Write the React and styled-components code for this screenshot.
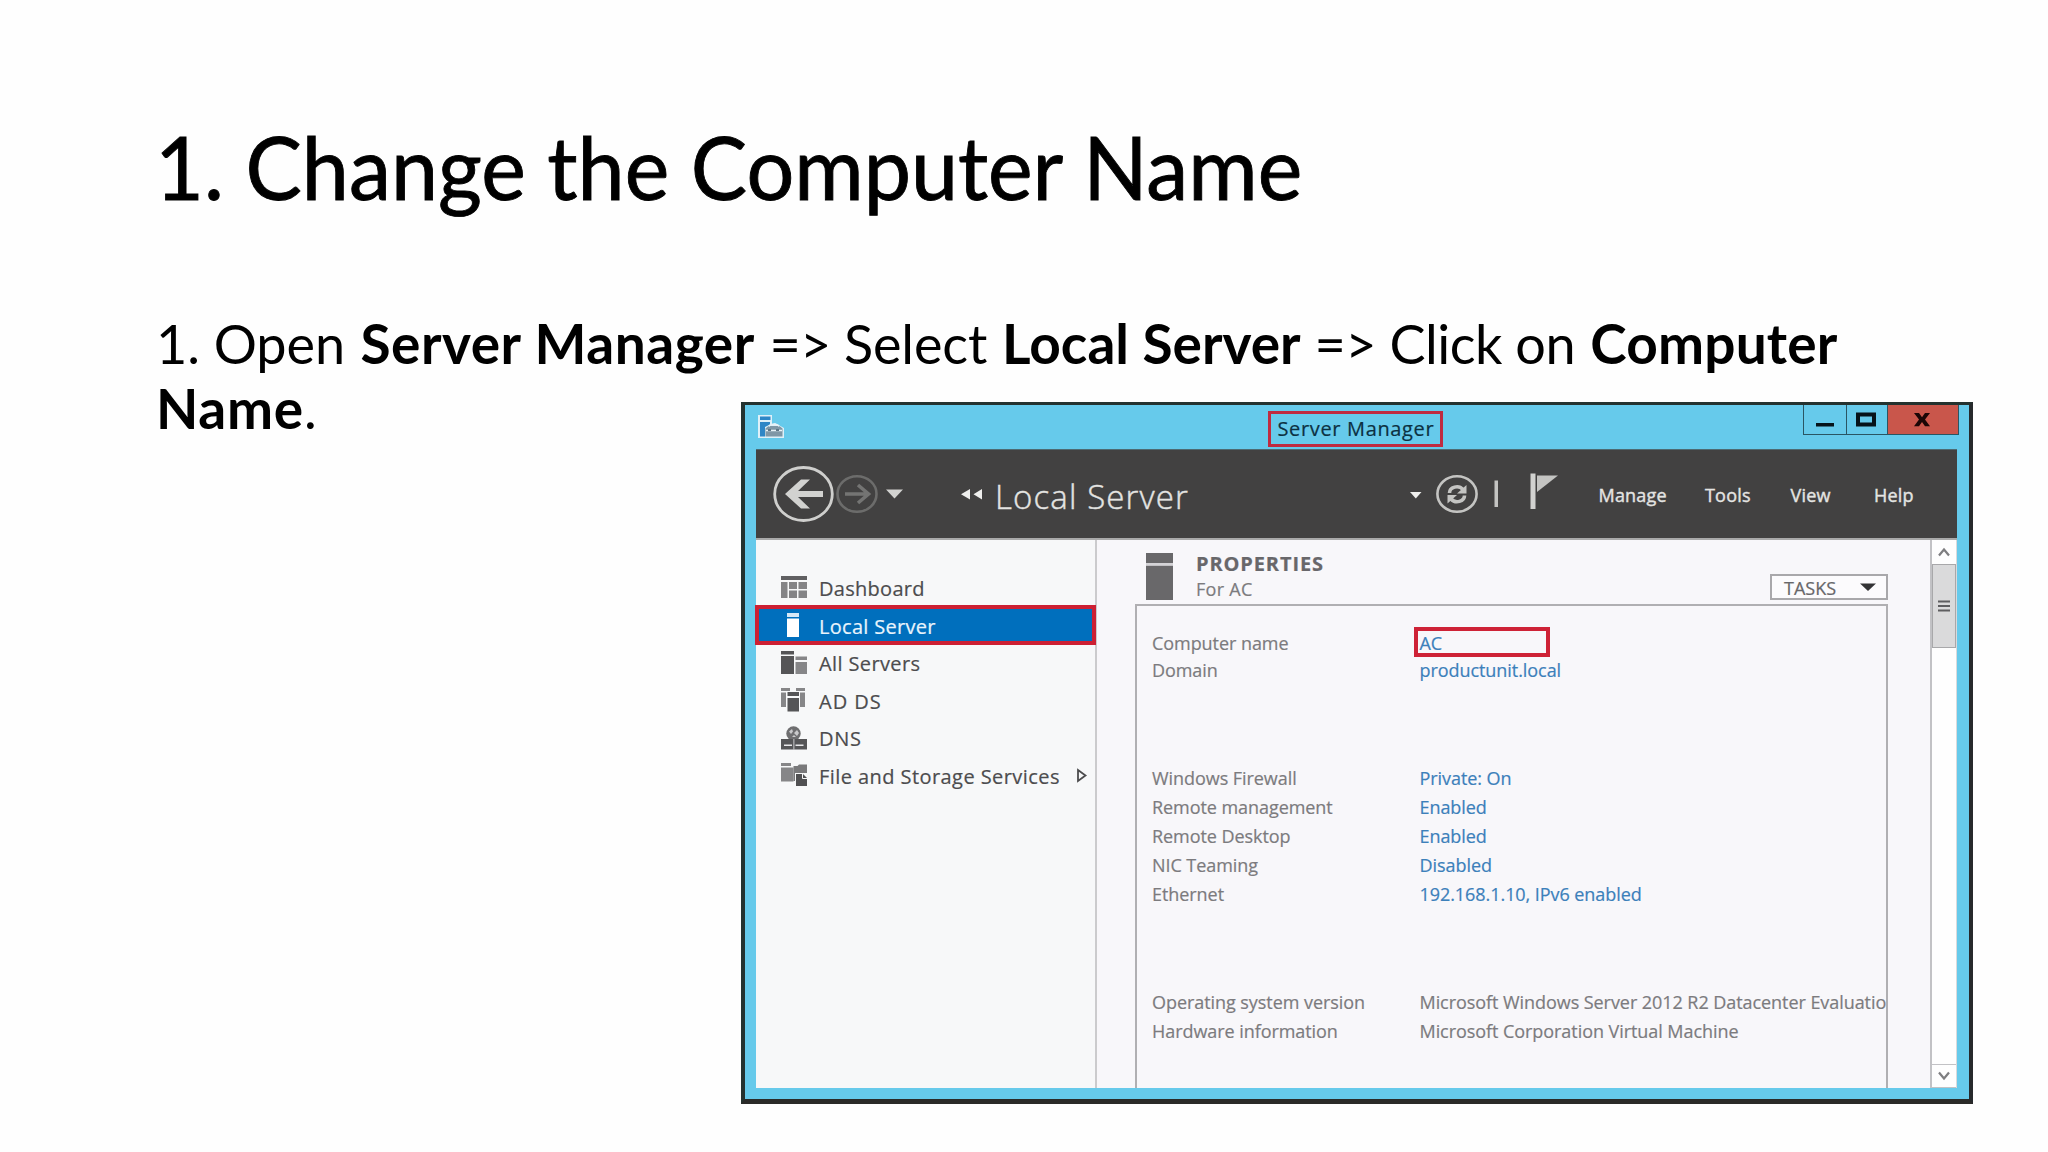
import React from 'react';
import styled, { createGlobalStyle } from 'styled-components';

const GlobalStyle = createGlobalStyle`
    *,
    *::before {
        box-sizing: border-box;
    }

    body {
        margin: 0;
        background: #fefefe;
    }
`

const Slide = styled.main`
    width: 2048px;
    height: 1152px;
    padding-top: 114px;
    overflow: hidden;
    background: #fefefe;
    color: #000;
    font-family: Lato, Carlito, sans-serif;
`

const Heading = styled.h1`
    width: 1300px;
    height: 104px;
    margin: 0 0 93px 155px;
    font-size: 88px;
    font-weight: 400;
    line-height: 104px;
    white-space: nowrap;
    transform: scaleX(0.959);
    transform-origin: left;
    -webkit-text-stroke: 0.9px #000;
`

const Instruction = styled.div`
    height: 91px;
    margin-left: 156px;
    font-size: 54px;
    line-height: 64.5px;
    white-space: nowrap;
`

const InstructionLine = styled.div`
    display: flex;
    align-items: baseline;
    height: 64.5px;
`

const Phrase = styled.span`
    flex: none;
    width: ${props => props.$width}px;
    font-size: ${props => props.$bold ? 55 : 54}px;
    font-weight: ${props => props.$bold ? 700 : 400};
    letter-spacing: ${props => props.$spacing || 0}px;
`

const Window = styled.section`
    display: flex;
    flex-direction: column;
    width: 1232px;
    height: 701.5px;
    margin-left: 741px;
    padding: 0 12px 11px 11px;
    border: solid #24322f;
    border-width: 3px 4px 5px;
    border-right-color: #26292c;
    border-bottom-color: #2a2a28;
    background: #66caeb;
    font-family: "Open Sans", "Noto Sans", sans-serif;
    -webkit-text-stroke: 0.2px;
`

const TitleBar = styled.header`
    display: flex;
    align-items: flex-start;
    flex: none;
    height: 44px;
    margin-right: -2px;
`

const AppIcon = styled.svg`
    width: 27px;
    height: 25px;
    margin: 9px 0 0 2px;
`

const WindowTitle = styled.div`
    width: 175px;
    height: 36px;
    margin: 6px 0 0 483px;
    padding-left: 6.5px;
    border: 3px solid #bf2b40;
    color: #0c3142;
    font-size: 20px;
    line-height: 29px;
    letter-spacing: 0.65px;
    white-space: nowrap;
`

const CaptionButtons = styled.div`
    display: flex;
    margin-left: auto;
    height: 30px;
    border: solid #2a5563;
    border-width: 0 1px 1px;
`

const CaptionButton = styled.button`
    display: flex;
    align-items: center;
    justify-content: center;
    width: ${props => props.$width}px;
    padding: 0 2px 0 0;
    border: 0;
    border-left: ${props => props.$first ? 0 : '1px solid #2a5563'};
    background: ${props => props.$close ? '#c9564b' : 'transparent'};
`

const Toolbar = styled.nav`
    display: flex;
    align-items: center;
    flex: none;
    height: 91px;
    border-top: 1px solid #4d6a72;
    border-bottom: 2px solid #a9a9a9;
    background: #424141;
    color: #e4e4e2;
`

const NavButtons = styled.svg`
    flex: none;
    width: 236px;
    height: 60px;
`

const ServerTitle = styled.div`
    width: 415px;
    font-size: 33px;
    font-weight: 300;
    line-height: 60px;
    letter-spacing: 1.12px;
    padding-left: 3px;
    padding-top: 5px;
    -webkit-text-stroke: 0.4px #e4e4e2;
`

const ToolbarIcons = styled.svg`
    flex: none;
    width: 191.5px;
    height: 60px;
    padding-right: 1.5px;
`

const MenuItem = styled.a`
    flex: none;
    width: ${props => props.$width}px;
    padding-top: 2px;
    font-size: 18px;
    letter-spacing: 0.2px;
    -webkit-text-stroke: 0.4px #e4e4e2;
`

const Content = styled.div`
    display: flex;
    flex: 1;
    min-height: 0;
    background: #f8f7fa;
`

const Sidebar = styled.aside`
    flex: none;
    width: 341px;
    padding-top: 29px;
    border-right: 2px solid #cbcbcd;
    background: #f7f8f9;
`

const SidebarItem = styled.div`
    display: flex;
    align-items: center;
    position: relative;
    height: 37.5px;
    padding-left: 25px;
    color: #4c4c4e;
    font-size: 20px;
    letter-spacing: ${props => props.$spacing}px;
    white-space: nowrap;

    span {
        padding-top: 2px;
    }

    svg {
        flex: none;
    }

    ${props => props.$selected && `
        height: 40px;
        margin: -1.25px -1px -1.25px -1px;
        padding-left: 22px;
        border: 4px solid #cc2033;
        background: #006fbd;
        color: #e9f4fc;
    `}
`

const SidebarIcon = styled.svg`
    width: 27px;
    height: 24px;
    margin-right: 11px;
`

const Expander = styled.svg`
    width: 12px;
    height: 15px;
    margin-left: 16px;
`

const Properties = styled.section`
    display: flex;
    flex-direction: column;
    flex: 1;
    min-width: 0;
    padding: 0 42px 0 38px;
    color: #7c7b7e;
    font-size: 18px;
`

const PropertiesHeader = styled.div`
    display: flex;
    align-items: flex-start;
    flex: none;
    height: 64px;
`

const ServerGlyph = styled.svg`
    width: 27px;
    height: 47px;
    margin: 13px 0 0 11px;
`

const PropertiesTitle = styled.div`
    margin: 11px 0 0 23px;
    line-height: 25px;

    h2 {
        margin: 0;
        color: #68676a;
        font-size: 20px;
        font-weight: 700;
        line-height: 25px;
        letter-spacing: 0.88px;
    }

    p {
        margin: 0;
        padding-top: 1px;
        letter-spacing: 0.29px;
    }
`

const TasksButton = styled.button`
    display: flex;
    align-items: center;
    justify-content: space-between;
    width: 118px;
    height: 26px;
    margin: 34px 0 0 auto;
    padding: 1px 10px 0 12px;
    border: 2px solid #a9a8ab;
    background: #fcfbfd;
    color: #68676a;
    font-family: inherit;
    font-size: 18px;
    line-height: 22px;
`

const PropertiesCard = styled.div`
    flex: 1;
    min-height: 0;
    padding: 23.5px 0 0 15px;
    overflow: hidden;
    border: 2px solid #b0afb2;
    border-bottom: 0;
`

const PropertyGroup = styled.dl`
    margin: 0 0 79.5px;
`

const PropertyRow = styled.div`
    display: grid;
    grid-template-columns: 267.5px 1fr;
    height: ${props => props.$height}px;
    line-height: ${props => props.$height}px;
    white-space: nowrap;

    dt,
    dd {
        margin: 0;
        letter-spacing: -0.06px;
    }
`

const PropertyValue = styled.dd`
    position: relative;
    color: ${props => props.$link ? '#3c80ba' : 'inherit'};

    /* red marker drawn round the value */
    ${props => props.$marked && `
        &::before {
            content: '';
            position: absolute;
            left: -6px;
            top: -2.500px;
            width: 136px;
            height: 30px;
            border: 4px solid #ce2236;
        }
    `}
`

const ScrollBar = styled.div`
    display: flex;
    flex-direction: column;
    flex: none;
    width: 27px;
    border-left: 2px solid #c2c2c5;
    border-right: 1px solid #dadadc;
    background: #fefefe;
`

const ScrollArrow = styled.div`
    display: flex;
    align-items: center;
    justify-content: center;
    height: 24px;
    border-bottom: ${props => props.$down ? 1 : 0}px solid #c2c2c5;
    border-top: ${props => props.$down ? 1 : 0}px solid #c2c2c5;
`

const ScrollThumb = styled.div`
    display: flex;
    align-items: center;
    justify-content: center;
    height: 84px;
    margin-bottom: auto;
    border: 1.5px solid #a8a8aa;
    background: #dadadb;
`

const icons = {
    dashboard: (
        <>
            <path d="M0 0h26v4H0z" fill="#606062" />
            <path d="M0 6h6.500v16H0zM8 6h8v7H8zM17.500 6H26v7h-8.500zM8 14.500h8V22H8zM17.500 14.500H26V22h-8.500z" fill="#848486" />
        </>
    ),
    local: (
        <>
            <path d="M6 0h12v4H6z" fill="#d6e8f6" />
            <path d="M6 5.500h12V24H6z" fill="#fff" />
        </>
    ),
    all: (
        <>
            <path d="M0 0h13v3.500H0zM0 5h13v18H0z" fill="#555557" />
            <path d="M14.500 5.500H26V9H14.500zM14.500 11H26v12H14.500z" fill="#868688" />
        </>
    ),
    adds: (
        <>
            <path d="M0 0h9v3H0zM15 0h9v3h-9zM0 4.500h5V19H0zM19 4.500h5V19h-5z" fill="#868688" />
            <path d="M6.500 4h11.500v4H6.500zM6.500 10h11.500v13.500H6.500z" fill="#555557" />
        </>
    ),
    dns: (
        <>
            <circle cx="12.500" cy="7.500" r="7.200" fill="#6e6e70" />
            <path d="M8 5.500l3-2.500 1 2.500-2 2.500zM13 7l3-3 2 3-2 3zM11 11l2-2 2 2" fill="#c9c9cb" />
            <path d="M0 13h26v10.500H0z" fill="#555557" />
            <path d="M3 18.500h8V20H3zM14.500 18.500h8V20h-8zM5 14v1.500M12.500 13h.8v10.500h-.8z" fill="#e8e8ea" />
        </>
    ),
    files: (
        <>
            <path d="M0 0h10v3H0zM0 4.500h12.500V18.500H0z" fill="#868688" />
            <path d="M12.500 3h4l1.500-1.500h8V10H14v8h-1.500z" fill="#79797b" />
            <path d="M15 11h7l4 4v8H15z" fill="#505052" />
            <path d="M21.500 11v4.500H26" fill="none" stroke="#f7f8f9" strokeWidth="1" />
        </>
    ),
};

const sidebarItems = [
    { label: 'Dashboard', icon: 'dashboard', spacing: 0.29 },
    { label: 'Local Server', icon: 'local', spacing: 0.3, isSelected: true },
    { label: 'All Servers', icon: 'all', spacing: 0.38 },
    { label: 'AD DS', icon: 'adds', spacing: 1 },
    { label: 'DNS', icon: 'dns', spacing: 0.71 },
    { label: 'File and Storage Services', icon: 'files', spacing: 0.43, hasChildren: true },
];

const propertyGroups = [
    {
        rowHeight: 27.5,
        rows: [
            { name: 'Computer name', value: 'AC', isLink: true, isMarked: true },
            { name: 'Domain', value: 'productunit.local', isLink: true },
        ]
    },
    {
        rowHeight: 28.9,
        rows: [
            { name: 'Windows Firewall', value: 'Private: On', isLink: true },
            { name: 'Remote management', value: 'Enabled', isLink: true },
            { name: 'Remote Desktop', value: 'Enabled', isLink: true },
            { name: 'NIC Teaming', value: 'Disabled', isLink: true },
            { name: 'Ethernet', value: '192.168.1.10, IPv6 enabled', isLink: true },
        ]
    },
    {
        rowHeight: 28.9,
        rows: [
            { name: 'Operating system version', value: 'Microsoft Windows Server 2012 R2 Datacenter Evaluatio' },
            { name: 'Hardware information', value: 'Microsoft Corporation Virtual Machine' },
        ]
    },
];

const WindowTitleBar = () => (
    <TitleBar>
        <AppIcon viewBox="0 0 27 25">
            <path d="M0 1h14v9l3-1 9 5v10H0z" fill="#dff0f8" />
            <path d="M2 2.500h10.500V6H2zM2 8h10v2.500L7 13v9.500H2z" fill="#2e86c6" />
            <path d="M7.500 14.500l3-2.500h11l3 2.500v8h-17z" fill="#7f97a6" />
            <path d="M11 12.500c1-3 9-3 10 0M8 16.500h16" fill="none" stroke="#e8f2f7" strokeWidth="1.500" />
            <path d="M10 15h3v2h-3zM18 15h3v2h-3z" fill="#5e7686" />
        </AppIcon>
        <WindowTitle>Server Manager</WindowTitle>
        <CaptionButtons>
            <CaptionButton $width={42} $first>
                <svg width="20" height="30"><path d="M2 18h19v3.500H2z" fill="#06131a" /></svg>
            </CaptionButton>
            <CaptionButton $width={41}>
                <svg width="22" height="30"><path d="M3 9.500h16v10H3z" fill="none" stroke="#06131a" strokeWidth="4" /></svg>
            </CaptionButton>
            <CaptionButton $width={71} $close>
                <svg width="18" height="30"><path d="M1 8h5l3 4.200L12 8h5l-5 6.500 5 6.700h-5l-3-4.300-3 4.300H1l5-6.700z" fill="#1c0606" /></svg>
            </CaptionButton>
        </CaptionButtons>
    </TitleBar>
);

const ServerToolbar = () => (
    <Toolbar>
        <NavButtons viewBox="0 0 236 60">
            <ellipse cx="47.500" cy="30" rx="28.800" ry="26.500" fill="none" stroke="#cfcfcd" strokeWidth="2.800" />
            <path d="M29 30L45 15.500h9L42 27h25v6H42l12 11.500H45z" fill="#d2d2d0" />
            <ellipse cx="101" cy="30" rx="19.500" ry="17.800" fill="none" stroke="#6c6c6b" strokeWidth="2.600" />
            <path d="M89 30h22M102 21l10.500 9-10.500 9" fill="none" stroke="#747473" strokeWidth="3.600" />
            <path d="M130 25.500h17L138.500 34.500z" fill="#d2d2d0" />
            <path d="M214 25v10.500L205 30.200zM226 25v10.500L217.500 30.200z" fill="#efefed" />
        </NavButtons>
        <ServerTitle>Local Server</ServerTitle>
        <ToolbarIcons viewBox="0 0 190 60">
            <path d="M3 28h11.500L8.800 34.500z" fill="#efefed" />
            <ellipse cx="50" cy="30" rx="19.600" ry="17.800" fill="none" stroke="#c4c4c2" strokeWidth="2.600" />
            <path d="M42.500 29c0-6 9-8.500 13.500-3.500" fill="none" stroke="#c4c4c2" strokeWidth="3.600" />
            <path d="M59.500 21v8.500H50z" fill="#c4c4c2" />
            <path d="M57.500 31.500c0 6-9 8.500-13.500 3.500" fill="none" stroke="#c4c4c2" strokeWidth="3.600" />
            <path d="M40.500 39.500V31H50z" fill="#c4c4c2" />
            <path d="M87.500 16.500h3.500V43h-3.500z" fill="#c4c4c2" />
            <path d="M123.500 9.500h5V45h-5z" fill="#d2d2d0" />
            <path d="M130 11.500H151L130 28z" fill="#c4c4c2" />
        </ToolbarIcons>
        <MenuItem $width={106.5}>Manage</MenuItem>
        <MenuItem $width={85.5}>Tools</MenuItem>
        <MenuItem $width={83.5}>View</MenuItem>
        <MenuItem $width={60}>Help</MenuItem>
    </Toolbar>
);

const ServerSidebar = () => (
    <Sidebar>
        {sidebarItems.map( ( { label, icon, spacing, isSelected, hasChildren } ) => (
            <SidebarItem key={label} $spacing={spacing} $selected={isSelected}>
                <SidebarIcon viewBox="0 0 27 24">{icons[icon]}</SidebarIcon>
                <span>{label}</span>
                {hasChildren &&
                    <Expander viewBox="0 0 12 15">
                        <path d="M2 2l7.500 5.500L2 13z" fill="none" stroke="#4c4c4e" strokeWidth="1.800" />
                    </Expander>
                }
            </SidebarItem>
        ) )}
    </Sidebar>
);

const ServerProperties = () => (
    <Properties>
        <PropertiesHeader>
            <ServerGlyph viewBox="0 0 27 47">
                <path d="M0 0h27v10H0zM0 12.500h27V47H0z" fill="#69686a" />
                <path d="M0 10h27v2.500H0z" fill="#d4d3d6" />
            </ServerGlyph>
            <PropertiesTitle>
                <h2>PROPERTIES</h2>
                <p>For AC</p>
            </PropertiesTitle>
            <TasksButton>
                TASKS
                <svg width="16" height="9"><path d="M0 .5h16L8 8z" fill="#333335" /></svg>
            </TasksButton>
        </PropertiesHeader>
        <PropertiesCard>
            {propertyGroups.map( ( { rowHeight, rows }, index ) => (
                <PropertyGroup key={index}>
                    {rows.map( ( { name, value, isLink, isMarked } ) => (
                        <PropertyRow key={name} $height={rowHeight}>
                            <dt>{name}</dt>
                            <PropertyValue $link={isLink} $marked={isMarked}>{value}</PropertyValue>
                        </PropertyRow>
                    ) )}
                </PropertyGroup>
            ) )}
        </PropertiesCard>
    </Properties>
);

const App = () => {
    return (
        <Slide>
            <GlobalStyle />
            <Heading>1. Change the Computer Name</Heading>
            <Instruction>
                <InstructionLine>
                    <Phrase $width={204.4} $spacing={-0.05}>1. Open</Phrase>
                    <Phrase $width={409.1} $spacing={0.54} $bold>Server Manager</Phrase>
                    <Phrase $width={74.4} $spacing={-0.8}>=&gt;</Phrase>
                    <Phrase $width={158.2} $spacing={-0.12}>Select</Phrase>
                    <Phrase $width={312.4} $spacing={0.03} $bold>Local Server</Phrase>
                    <Phrase $width={75} $spacing={-0.5}>=&gt;</Phrase>
                    <Phrase $width={200.9} $spacing={-0.5}>Click on</Phrase>
                    <Phrase $width={250} $spacing={0.15} $bold>Computer</Phrase>
                </InstructionLine>
                <InstructionLine>
                    <Phrase $width={148} $spacing={0.7} $bold>Name</Phrase>
                    <Phrase $width={20}>.</Phrase>
                </InstructionLine>
            </Instruction>
            <Window>
                <WindowTitleBar />
                <ServerToolbar />
                <Content>
                    <ServerSidebar />
                    <ServerProperties />
                    <ScrollBar>
                        <ScrollArrow>
                            <svg width="14" height="10"><path d="M2 8.500l5-6 5 6" fill="none" stroke="#7e7e80" strokeWidth="2.200" /></svg>
                        </ScrollArrow>
                        <ScrollThumb>
                            <svg width="12" height="12"><path d="M0 1.500h12M0 6h12M0 10.500h12" stroke="#5e5e60" strokeWidth="2" /></svg>
                        </ScrollThumb>
                        <ScrollArrow $down>
                            <svg width="14" height="10"><path d="M2 1.500l5 6 5-6" fill="none" stroke="#7e7e80" strokeWidth="2.200" /></svg>
                        </ScrollArrow>
                    </ScrollBar>
                </Content>
            </Window>
        </Slide>
    );
};

export default App;
